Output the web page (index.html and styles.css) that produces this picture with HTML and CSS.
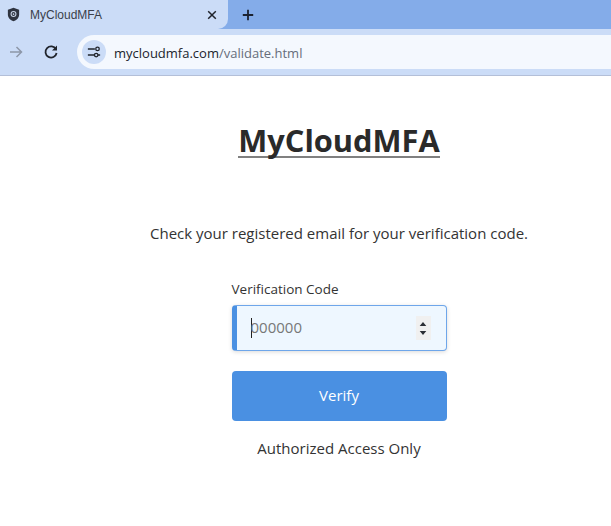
FILE: index.html
```html
<!DOCTYPE html>
<html lang="en">
<head>
<meta charset="utf-8">
<title>MyCloudMFA</title>
<link rel="stylesheet" href="styles.css">
</head>
<body>
<header class="chrome">
  <div class="tabstrip">
    <div class="tab">
      <svg class="favicon" viewBox="0 0 16 16" width="15" height="15"><path d="M8 .8 14 3v5c0 3.600-2.500 6.100-6 7.200C4.500 14.100 2 11.600 2 8V3z" fill="#2f3440"/><circle cx="8" cy="7.500" r="2.600" fill="none" stroke="#c9d4e6" stroke-width="1.100"/><circle cx="8" cy="7.500" r=".9" fill="#c9d4e6"/></svg>
      <span class="tab-title">MyCloudMFA</span>
      <svg class="tab-close" viewBox="0 0 10 10" width="10" height="10"><path d="M1.200 1.200l7.600 7.600M8.800 1.200L1.200 8.800" stroke="#20242c" stroke-width="1.500" fill="none"/></svg>
    </div>
    <svg class="new-tab" viewBox="0 0 12 12" width="12" height="12"><path d="M6 .8v10.400M.8 6h10.400" stroke="#1b2230" stroke-width="1.800" fill="none"/></svg>
  </div>
  <div class="toolbar">
    <svg class="forward" viewBox="0 0 14 14" width="14" height="14"><path d="M1 7h11.500M7.500 2l5 5-5 5" stroke="#8d97a8" stroke-width="1.500" fill="none"/></svg>
    <svg class="reload" viewBox="0 0 16 16" width="16" height="16"><path d="M13 5.200A5.600 5.600 0 1 0 13.600 9" stroke="#20242c" stroke-width="1.800" fill="none"/><path d="M14 1.500v5H9z" fill="#20242c"/></svg>
    <div class="omnibox">
      <span class="site-icon">
        <svg viewBox="0 0 16 16" width="14" height="14"><path d="M1 4.500h8M12.500 11.500h2.500M1 11.500h7" stroke="#20242c" stroke-width="1.800" fill="none"/><circle cx="12" cy="4.500" r="2" fill="none" stroke="#20242c" stroke-width="1.500"/><circle cx="10.500" cy="11.500" r="2" fill="none" stroke="#20242c" stroke-width="1.500"/></svg>
      </span>
      <span class="url">mycloudmfa.com<span class="url-path">/validate.html</span></span>
    </div>
  </div>
</header>
<main class="page">
  <h1 class="brand">MyCloudMFA</h1>
  <p class="hint">Check your registered email for your verification code.</p>
  <form class="form">
    <label class="label" for="code">Verification Code</label>
    <div class="field">
      <span class="caret"></span>
      <span class="placeholder" id="code">000000</span>
      <span class="spinner">
        <svg viewBox="0 0 10 16" width="10" height="16"><path d="M5 2 8.300 6H1.700zM1.700 11h6.600L5 15z" fill="#2b2f36"/></svg>
      </span>
    </div>
    <button class="verify" type="button">Verify</button>
    <p class="notice">Authorized Access Only</p>
  </form>
</main>
</body>
</html>
```
FILE: styles.css
```css
* { box-sizing: border-box; }
html, body { margin: 0; padding: 0; height: 100%; overflow: hidden; background: #fff; }
body { font-family: "Open Sans", "Noto Sans", sans-serif; color: #2f2f2f; }

.chrome { background: #cbdcf7; border-bottom: 1px solid #b3bfd8; height: 76px; }
.tabstrip { display: flex; align-items: center; height: 29px; background: #84ace9; }
.tab { display: flex; align-items: center; width: 228px; height: 29px; padding: 0 11px 0 6px; background: #cbdcf7; border-bottom-right-radius: 10px; }
.favicon { flex: none; }
.tab-title { flex: 1; margin-left: 9px; font: 12px "Liberation Sans", sans-serif; color: #3a3f4a; }
.tab-close { flex: none; }
.new-tab { margin-left: 14px; }

.toolbar { display: flex; align-items: center; height: 46px; padding-left: 9px; }
.forward { flex: none; }
.reload { flex: none; margin-left: 20px; }
.omnibox { flex: 1; display: flex; align-items: center; height: 34px; margin-left: 18px; padding-left: 5px; background: #f4f8fe; border-radius: 17px 0 0 17px; }
.site-icon { display: flex; align-items: center; justify-content: center; width: 24px; height: 24px; border-radius: 50%; background: #cbdcf7; }
.url { margin-left: 8px; padding-top: 1px; font: 13px "Open Sans", sans-serif; color: #20242c; }
.url-path { color: #666d7a; }

.page { display: flex; flex-direction: column; align-items: center; padding-left: 67px; }
.brand { margin: 48px 0 0; font-size: 30.800px; line-height: 32px; font-weight: 700; color: #2a2a2a; border-bottom: 2px solid #808080; }
.hint { margin: 64px 0 0; font-size: 15px; line-height: 22px; color: #333; white-space: nowrap; }
.form { display: flex; flex-direction: column; width: 215px; margin-top: 36px; }
.label { font-size: 13.500px; line-height: 18px; color: #333; }
.field { display: flex; align-items: center; height: 46px; margin-top: 7px; padding: 0 15px 0 14px; background: #eef7ff; border: 1px solid #6ea6ea; border-left: 5px solid #4a90e2; border-radius: 4px; box-shadow: 0 1px 4px rgba(0,0,0,.15); }
.caret { width: 1px; height: 20px; background: #222; margin-right: -1px; }
.placeholder { flex: 1; padding-bottom: 2px; font-size: 15px; color: #777; }
.spinner { display: flex; align-items: center; justify-content: center; width: 15px; height: 24px; background: #f0f0f0; }
.verify { height: 50px; margin-top: 20px; padding-bottom: 3px; border: 0; border-radius: 4px; background: #4a90e2; color: #fff; font: 15px "Open Sans", sans-serif; }
.notice { margin: 17px 0 0; text-align: center; font-size: 15px; line-height: 20px; color: #333; white-space: nowrap; }
```
